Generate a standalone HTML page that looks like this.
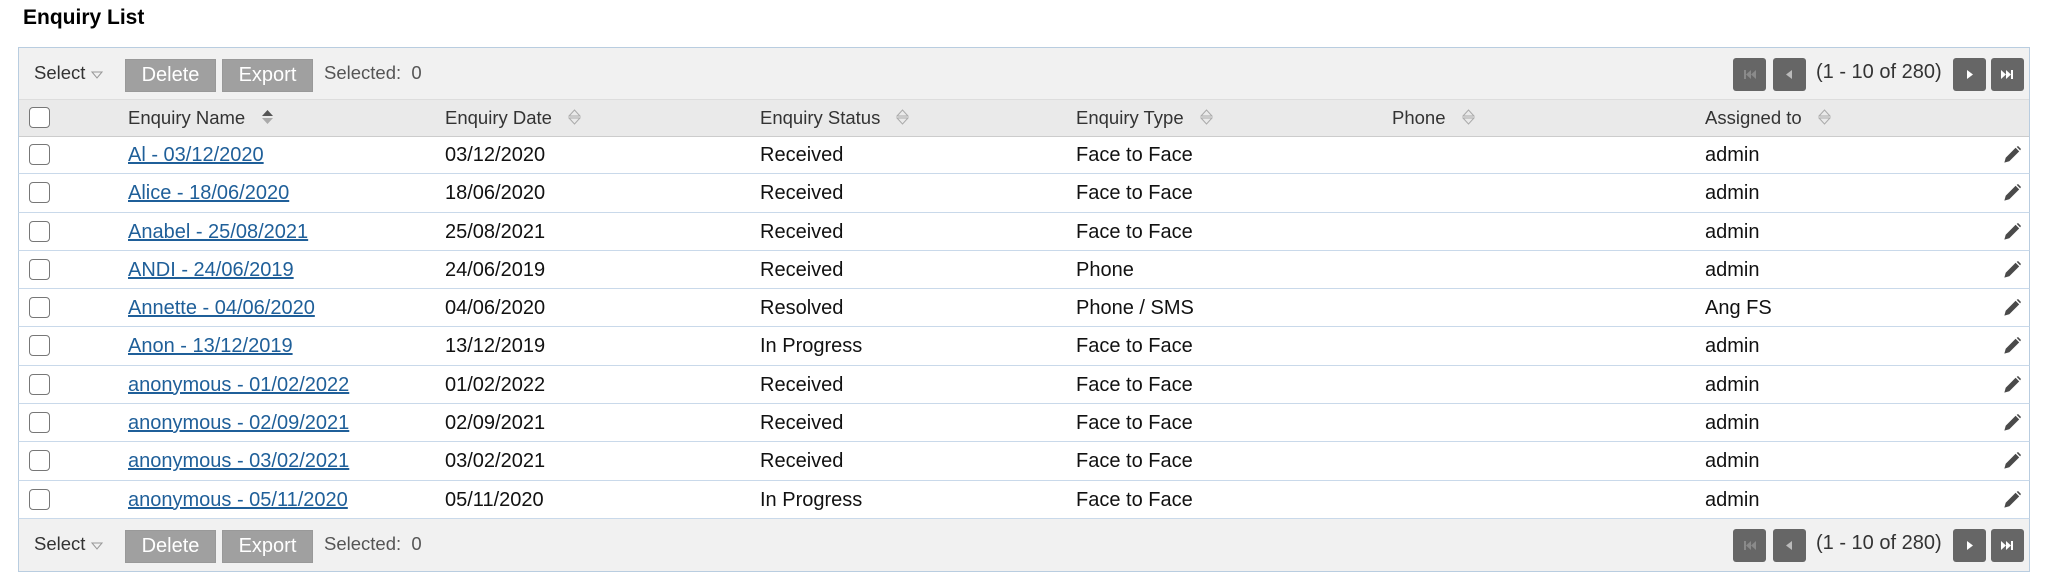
<!DOCTYPE html>
<html><head><style>
*{margin:0;padding:0;box-sizing:border-box}
body{width:2048px;height:588px;background:#fff;font-family:"Liberation Sans",Arial,sans-serif;position:relative;overflow:hidden;color:#111}
.a{position:absolute;white-space:nowrap}
h1{position:absolute;left:23px;top:6px;font-size:21px;font-weight:bold;color:#000}
.tbl{position:absolute;left:18px;top:47px;width:2012px;height:525px;border:1px solid #b9cde0;background:#fff}
.bar{position:absolute;left:0;width:100%;background:#f1f1f1}
.btn{position:absolute;background:#a0a0a0;color:#fff;font-size:20px;text-align:center;line-height:31px;height:33px;border:1px solid #999}
.pg{position:absolute;width:33px;height:33px;background:#666;border-radius:3px}
.row{position:absolute;left:0;width:100%;height:38.3px;border-bottom:1px solid #c9d9ea;font-size:20px;line-height:38px}
.cb{position:absolute;left:10px;top:8px;width:21px;height:21px;border:1.5px solid #777;border-radius:4px;background:#fff}
.row span{position:absolute}
a{color:#1f5f99;text-decoration:underline}
.hd{background:#eaeaea;color:#333;border-bottom:1px solid #ccc;height:37px;line-height:36px;font-size:18.5px}
.s{display:inline-block;margin-left:16px;vertical-align:middle;width:13px;height:16px;position:relative;top:-2px}
.sel{left:15px;top:14px;font-size:18.5px;color:#333}
.st{left:305px;top:14px;font-size:18.5px;color:#555}
.pt{left:1797px;top:13px;font-size:20px;color:#333}
.pe{position:absolute;left:1984px;top:10px}
</style></head><body>
<h1>Enquiry List</h1>
<div class="tbl">
 <div class="bar" style="top:0;height:52px;border-bottom:1px solid #ddd">
  <span class="a sel">Select <svg width="12" height="8" viewBox="0 0 12 8"><path d="M1 1h10L6 7z" fill="none" stroke="#999"/></svg></span>
  <div class="btn" style="left:106px;top:11px;width:91px">Delete</div>
  <div class="btn" style="left:203px;top:11px;width:91px">Export</div>
  <span class="a st">Selected:&nbsp; 0</span>
  <div class="pg" style="left:1714px;top:10px"><svg width="33" height="33"><path d="M11 12v9h2v-9zM18 12l-5 4.5 5 4.5zM23 12l-5 4.5 5 4.5z" fill="#8a8a8a"/></svg></div>
  <div class="pg" style="left:1754px;top:10px"><svg width="33" height="33"><path d="M19 12l-6 4.5 6 4.5z" fill="#bbb"/></svg></div>
  <span class="a pt">(1 - 10 of 280)</span>
  <div class="pg" style="left:1934px;top:10px"><svg width="33" height="33"><path d="M14 12l6 4.5-6 4.5z" fill="#fff"/></svg></div>
  <div class="pg" style="left:1972px;top:10px"><svg width="33" height="33"><path d="M10 12l5 4.5-5 4.5zM15 12l5 4.5-5 4.5zM20 12h2v9h-2z" fill="#fff"/></svg></div>
 </div>
 <div class="row hd" style="top:52px">
  <div class="cb" style="top:7px"></div>
  <span style="left:109px">Enquiry Name<svg class="s" viewBox="0 0 13 16"><path d="M1 7L6.5 1l5.5 6z" fill="#555"/><path d="M1 9l5.5 6 5.5-6z" fill="#aaa"/></svg></span>
  <span style="left:426px">Enquiry Date<svg class="s" viewBox="0 0 13 16"><path d="M1 7L6.5 1l5.5 6zM1 9l5.5 6 5.5-6z" fill="none" stroke="#aaa"/></svg></span>
  <span style="left:741px">Enquiry Status<svg class="s" viewBox="0 0 13 16"><path d="M1 7L6.5 1l5.5 6zM1 9l5.5 6 5.5-6z" fill="none" stroke="#aaa"/></svg></span>
  <span style="left:1057px">Enquiry Type<svg class="s" viewBox="0 0 13 16"><path d="M1 7L6.5 1l5.5 6zM1 9l5.5 6 5.5-6z" fill="none" stroke="#aaa"/></svg></span>
  <span style="left:1373px">Phone<svg class="s" viewBox="0 0 13 16"><path d="M1 7L6.5 1l5.5 6zM1 9l5.5 6 5.5-6z" fill="none" stroke="#aaa"/></svg></span>
  <span style="left:1686px">Assigned to<svg class="s" viewBox="0 0 13 16"><path d="M1 7L6.5 1l5.5 6zM1 9l5.5 6 5.5-6z" fill="none" stroke="#aaa"/></svg></span>
 </div>
 <div class="bar" style="top:471px;height:52px">
  <span class="a sel">Select <svg width="12" height="8" viewBox="0 0 12 8"><path d="M1 1h10L6 7z" fill="none" stroke="#999"/></svg></span>
  <div class="btn" style="left:106px;top:11px;width:91px">Delete</div>
  <div class="btn" style="left:203px;top:11px;width:91px">Export</div>
  <span class="a st">Selected:&nbsp; 0</span>
  <div class="pg" style="left:1714px;top:10px"><svg width="33" height="33"><path d="M11 12v9h2v-9zM18 12l-5 4.5 5 4.5zM23 12l-5 4.5 5 4.5z" fill="#8a8a8a"/></svg></div>
  <div class="pg" style="left:1754px;top:10px"><svg width="33" height="33"><path d="M19 12l-6 4.5 6 4.5z" fill="#bbb"/></svg></div>
  <span class="a pt">(1 - 10 of 280)</span>
  <div class="pg" style="left:1934px;top:10px"><svg width="33" height="33"><path d="M14 12l6 4.5-6 4.5z" fill="#fff"/></svg></div>
  <div class="pg" style="left:1972px;top:10px"><svg width="33" height="33"><path d="M10 12l5 4.5-5 4.5zM15 12l5 4.5-5 4.5zM20 12h2v9h-2z" fill="#fff"/></svg></div>
 </div>
</div>
<div class="a" style="left:18px;top:136px;width:2012px">
<div class="row" style="position:relative;border-left:1px solid #b9cde0;border-right:1px solid #b9cde0"><div class="cb"></div><span style="left:109px"><a>Al - 03/12/2020</a></span><span style="left:426px">03/12/2020</span><span style="left:741px">Received</span><span style="left:1057px">Face to Face</span><span style="left:1686px">admin</span><svg class="pe" width="18" height="18" viewBox="0 0 20 20"><path d="M1.5 18.5l1.5-5.5L14 2l4 4L7 17zM15.2 1l1.5-1 3.3 3.3-1 1.5z" fill="#4a4a4a"/></svg></div>
<div class="row" style="position:relative;border-left:1px solid #b9cde0;border-right:1px solid #b9cde0"><div class="cb"></div><span style="left:109px"><a>Alice - 18/06/2020</a></span><span style="left:426px">18/06/2020</span><span style="left:741px">Received</span><span style="left:1057px">Face to Face</span><span style="left:1686px">admin</span><svg class="pe" width="18" height="18" viewBox="0 0 20 20"><path d="M1.5 18.5l1.5-5.5L14 2l4 4L7 17zM15.2 1l1.5-1 3.3 3.3-1 1.5z" fill="#4a4a4a"/></svg></div>
<div class="row" style="position:relative;border-left:1px solid #b9cde0;border-right:1px solid #b9cde0"><div class="cb"></div><span style="left:109px"><a>Anabel - 25/08/2021</a></span><span style="left:426px">25/08/2021</span><span style="left:741px">Received</span><span style="left:1057px">Face to Face</span><span style="left:1686px">admin</span><svg class="pe" width="18" height="18" viewBox="0 0 20 20"><path d="M1.5 18.5l1.5-5.5L14 2l4 4L7 17zM15.2 1l1.5-1 3.3 3.3-1 1.5z" fill="#4a4a4a"/></svg></div>
<div class="row" style="position:relative;border-left:1px solid #b9cde0;border-right:1px solid #b9cde0"><div class="cb"></div><span style="left:109px"><a>ANDI - 24/06/2019</a></span><span style="left:426px">24/06/2019</span><span style="left:741px">Received</span><span style="left:1057px">Phone</span><span style="left:1686px">admin</span><svg class="pe" width="18" height="18" viewBox="0 0 20 20"><path d="M1.5 18.5l1.5-5.5L14 2l4 4L7 17zM15.2 1l1.5-1 3.3 3.3-1 1.5z" fill="#4a4a4a"/></svg></div>
<div class="row" style="position:relative;border-left:1px solid #b9cde0;border-right:1px solid #b9cde0"><div class="cb"></div><span style="left:109px"><a>Annette - 04/06/2020</a></span><span style="left:426px">04/06/2020</span><span style="left:741px">Resolved</span><span style="left:1057px">Phone / SMS</span><span style="left:1686px">Ang FS</span><svg class="pe" width="18" height="18" viewBox="0 0 20 20"><path d="M1.5 18.5l1.5-5.5L14 2l4 4L7 17zM15.2 1l1.5-1 3.3 3.3-1 1.5z" fill="#4a4a4a"/></svg></div>
<div class="row" style="position:relative;border-left:1px solid #b9cde0;border-right:1px solid #b9cde0"><div class="cb"></div><span style="left:109px"><a>Anon - 13/12/2019</a></span><span style="left:426px">13/12/2019</span><span style="left:741px">In Progress</span><span style="left:1057px">Face to Face</span><span style="left:1686px">admin</span><svg class="pe" width="18" height="18" viewBox="0 0 20 20"><path d="M1.5 18.5l1.5-5.5L14 2l4 4L7 17zM15.2 1l1.5-1 3.3 3.3-1 1.5z" fill="#4a4a4a"/></svg></div>
<div class="row" style="position:relative;border-left:1px solid #b9cde0;border-right:1px solid #b9cde0"><div class="cb"></div><span style="left:109px"><a>anonymous - 01/02/2022</a></span><span style="left:426px">01/02/2022</span><span style="left:741px">Received</span><span style="left:1057px">Face to Face</span><span style="left:1686px">admin</span><svg class="pe" width="18" height="18" viewBox="0 0 20 20"><path d="M1.5 18.5l1.5-5.5L14 2l4 4L7 17zM15.2 1l1.5-1 3.3 3.3-1 1.5z" fill="#4a4a4a"/></svg></div>
<div class="row" style="position:relative;border-left:1px solid #b9cde0;border-right:1px solid #b9cde0"><div class="cb"></div><span style="left:109px"><a>anonymous - 02/09/2021</a></span><span style="left:426px">02/09/2021</span><span style="left:741px">Received</span><span style="left:1057px">Face to Face</span><span style="left:1686px">admin</span><svg class="pe" width="18" height="18" viewBox="0 0 20 20"><path d="M1.5 18.5l1.5-5.5L14 2l4 4L7 17zM15.2 1l1.5-1 3.3 3.3-1 1.5z" fill="#4a4a4a"/></svg></div>
<div class="row" style="position:relative;border-left:1px solid #b9cde0;border-right:1px solid #b9cde0"><div class="cb"></div><span style="left:109px"><a>anonymous - 03/02/2021</a></span><span style="left:426px">03/02/2021</span><span style="left:741px">Received</span><span style="left:1057px">Face to Face</span><span style="left:1686px">admin</span><svg class="pe" width="18" height="18" viewBox="0 0 20 20"><path d="M1.5 18.5l1.5-5.5L14 2l4 4L7 17zM15.2 1l1.5-1 3.3 3.3-1 1.5z" fill="#4a4a4a"/></svg></div>
<div class="row" style="position:relative;border-left:1px solid #b9cde0;border-right:1px solid #b9cde0"><div class="cb"></div><span style="left:109px"><a>anonymous - 05/11/2020</a></span><span style="left:426px">05/11/2020</span><span style="left:741px">In Progress</span><span style="left:1057px">Face to Face</span><span style="left:1686px">admin</span><svg class="pe" width="18" height="18" viewBox="0 0 20 20"><path d="M1.5 18.5l1.5-5.5L14 2l4 4L7 17zM15.2 1l1.5-1 3.3 3.3-1 1.5z" fill="#4a4a4a"/></svg></div>
</div>
</body></html>
